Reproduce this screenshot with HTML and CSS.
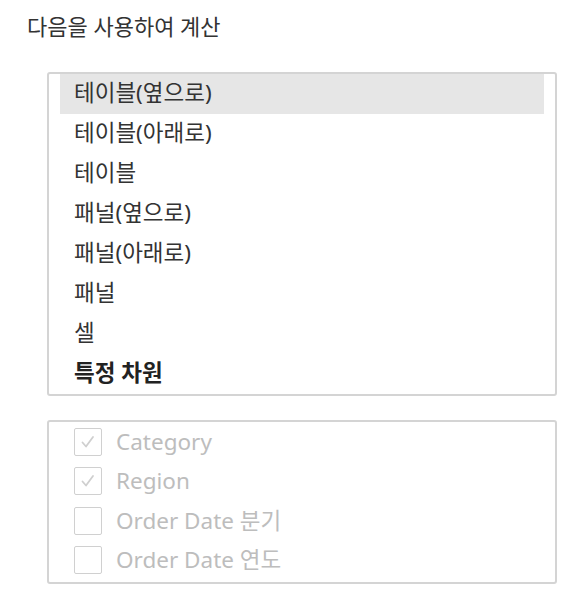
FILE: index.html
```html
<!DOCTYPE html>
<html lang="ko">
<head>
<meta charset="utf-8">
<link rel="stylesheet" href="styles.css">
</head>
<body>
<div class="page">
  <div class="title">다음을 사용하여 계산</div>
  <ul class="list">
    <li class="item selected">테이블(옆으로)</li>
    <li class="item">테이블(아래로)</li>
    <li class="item">테이블</li>
    <li class="item">패널(옆으로)</li>
    <li class="item">패널(아래로)</li>
    <li class="item">패널</li>
    <li class="item">셀</li>
    <li class="item bold">특정 차원</li>
  </ul>
  <ul class="checks">
    <li class="check-row"><span class="box"><svg viewBox="0 0 28 28" width="28" height="28"><path d="M8.5 14.5 L12 18.5 L19 9" fill="none" stroke="#cfcfcf" stroke-width="1.8" stroke-linecap="round" stroke-linejoin="round"/></svg></span><span class="label">Category</span></li>
    <li class="check-row"><span class="box"><svg viewBox="0 0 28 28" width="28" height="28"><path d="M8.5 14.5 L12 18.5 L19 9" fill="none" stroke="#cfcfcf" stroke-width="1.8" stroke-linecap="round" stroke-linejoin="round"/></svg></span><span class="label">Region</span></li>
    <li class="check-row"><span class="box"></span><span class="label">Order Date 분기</span></li>
    <li class="check-row"><span class="box"></span><span class="label">Order Date 연도</span></li>
  </ul>
</div>
</body>
</html>
```
FILE: styles.css
```css
html, body {
  margin: 0;
  padding: 0;
  background: #ffffff;
}
body {
  font-family: "Noto Sans", "Noto Sans CJK KR", sans-serif;
  color: #333333;
}
.page {
  width: 580px;
  height: 610px;
  box-sizing: border-box;
  padding: 11px 0 0 0;
}
.title {
  font-size: 22px;
  line-height: 30px;
  padding-left: 27px;
  color: #333333;
}
.list {
  list-style: none;
  margin: 31px 0 0 47px;
  padding: 0 11px;
  width: 510px;
  box-sizing: border-box;
  border: 2px solid #d4d4d4;
  border-radius: 3px;
}
.item {
  height: 40px;
  line-height: 38px;
  padding-left: 14px;
  font-size: 22.5px;
  color: #333333;
}
.item.selected {
  background: #e6e6e6;
}
.item.bold {
  font-weight: 700;
  color: #222222;
}
.checks {
  list-style: none;
  margin: 24px 0 0 47px;
  padding: 0 0 2px 0;
  width: 510px;
  box-sizing: border-box;
  border: 2px solid #d4d4d4;
  border-radius: 3px;
}
.check-row {
  height: 39.5px;
  display: flex;
  align-items: center;
  padding-left: 25px;
}
.box {
  width: 28px;
  height: 28px;
  box-sizing: border-box;
  border: 1.5px solid #d0d0d0;
  border-radius: 2px;
  display: flex;
  align-items: center;
  justify-content: center;
  margin-right: 14px;
}
.box svg {
  display: block;
  flex: none;
}
.label {
  font-size: 22.5px;
  color: #bdbdbd;
  line-height: 28px;
}
```
